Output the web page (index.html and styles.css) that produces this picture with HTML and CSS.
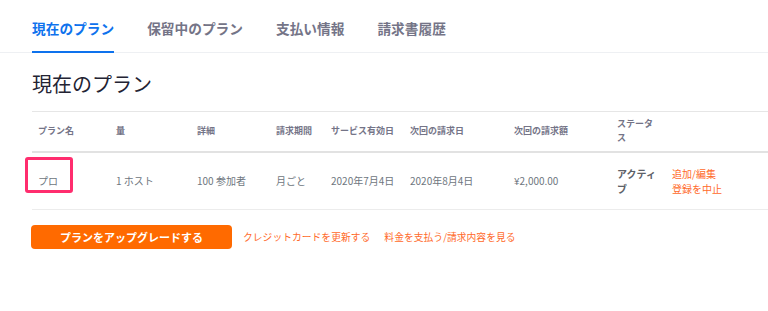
FILE: index.html
```html
<!DOCTYPE html>
<html lang="ja">
<head>
<meta charset="utf-8">
<link rel="stylesheet" href="styles.css">
</head>
<body>
<nav class="tabs">
  <a class="tab active">現在のプラン</a>
  <a class="tab">保留中のプラン</a>
  <a class="tab">支払い情報</a>
  <a class="tab">請求書履歴</a>
</nav>
<main class="content">
  <h1 class="title">現在のプラン</h1>
  <div class="table-wrap">
    <table class="plans">
      <colgroup>
        <col class="c1"><col class="c2"><col class="c3"><col class="c4"><col class="c5"><col class="c6"><col class="c7"><col class="c8"><col class="c9">
      </colgroup>
      <thead>
        <tr>
          <th>プラン名</th><th>量</th><th>詳細</th><th>請求期間</th><th>サービス有効日</th><th>次回の請求日</th><th>次回の請求額</th><th>ステータス</th><th></th>
        </tr>
      </thead>
      <tbody>
        <tr>
          <td class="plan-cell"><span class="plan-name">プロ</span><span class="highlight"></span></td>
          <td>1 ホスト</td>
          <td>100 参加者</td>
          <td>月ごと</td>
          <td>2020年7月4日</td>
          <td>2020年8月4日</td>
          <td>¥2,000.00</td>
          <td class="status">アクティブ</td>
          <td class="actions"><a class="link">追加/編集</a><a class="link">登録を中止</a></td>
        </tr>
      </tbody>
    </table>
  </div>
  <div class="footer-actions">
    <button class="upgrade">プランをアップグレードする</button>
    <a class="link">クレジットカードを更新する</a>
    <a class="link">料金を支払う/請求内容を見る</a>
  </div>
</main>
</body>
</html>
```
FILE: styles.css
```css
* { box-sizing: border-box; }
html, body { margin: 0; padding: 0; background: #fff; }
body {
  width: 768px;
  height: 311px;
  overflow: hidden;
  font-family: "Noto Sans CJK JP", "Noto Sans", sans-serif;
  color: #333;
}
.tabs {
  display: flex;
  gap: 33px;
  padding: 18px 0 0 32px;
  border-bottom: 1px solid #eef0f3;
  height: 53px;
}
.tab {
  font-size: 13.7px;
  font-weight: 700;
  line-height: 20px;
  color: #747487;
  height: 35px;
}
.tab.active {
  color: #0e72ed;
  border-bottom: 2px solid #0e72ed;
}
.content { padding-left: 32px; }
.title {
  margin: 0;
  padding-top: 18px;
  font-size: 20px;
  font-weight: 400;
  line-height: 26px;
  color: #232333;
  height: 58px;
}
.plans {
  border-collapse: collapse;
  table-layout: fixed;
  width: 736px;
}
.c1 { width: 78px; } .c2 { width: 81px; } .c3 { width: 79px; } .c4 { width: 55px; }
.c5 { width: 79px; } .c6 { width: 104px; } .c7 { width: 103px; } .c8 { width: 55px; } .c9 { width: 102px; }
.plans th, .plans td {
  text-align: left;
  vertical-align: middle;
  padding: 0 6px;
}
.plans thead tr { height: 40px; border-top: 1px solid #e6e6e6; border-bottom: 2px solid #e2e2e2; }
.plans th {
  font-size: 9px;
  font-weight: 700;
  color: #747487;
  line-height: 14px;
}
.plans tbody tr { height: 58px; border-bottom: 1px solid #ececec; }
.plans td {
  font-size: 10px;
  color: #6e7680;
  line-height: 15px;
}
.plan-name { color: #6e7680; }
.plans td.status { font-weight: 700; color: #5d6168; }
.plan-cell { position: relative; }
.highlight {
  position: absolute;
  left: -7px;
  top: 4px;
  width: 48px;
  height: 36px;
  border: 3px solid #ff2d6e;
  border-radius: 3px;
}
.actions .link { display: block; }
.link { color: #ff6a2a; font-size: 10px; line-height: 15px; }
.footer-actions .link { font-size: 9.8px; }
.footer-actions {
  display: flex;
  align-items: center;
  margin-top: 15px;
}
.upgrade {
  width: 201px;
  height: 24px;
  margin: 0 11px 0 -1px;
  border: none;
  border-radius: 4px;
  background: #ff6a00;
  color: #fff;
  font-family: inherit;
  font-size: 11px;
  font-weight: 700;
  padding: 0;
}
.footer-actions .link + .link { margin-left: 14px; }
```
